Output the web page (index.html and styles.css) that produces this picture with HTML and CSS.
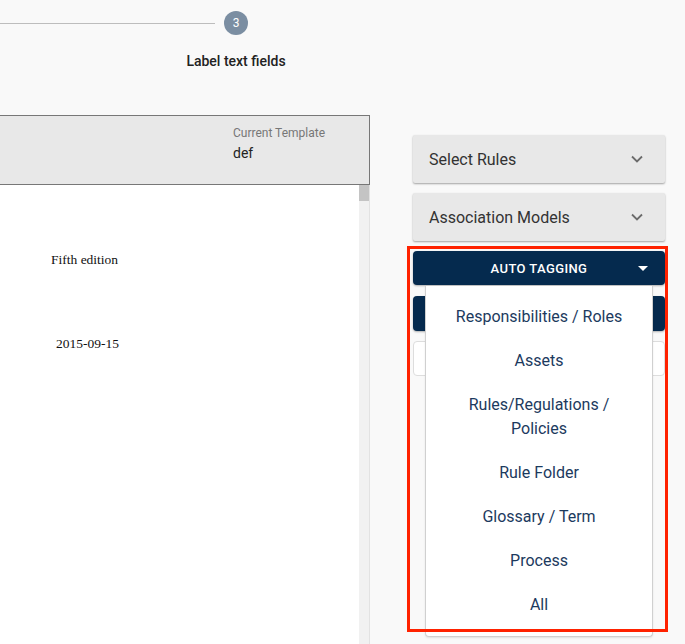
FILE: index.html
```html
<!DOCTYPE html>
<html>
<head>
  <link rel="stylesheet" href="styles.css">
</head>
<body>
  <div class="stepper">
    <div class="step-row">
      <div class="step-line"></div>
      <div class="step-circle">3</div>
    </div>
    <div class="step-label">Label text fields</div>
  </div>

  <div class="main">
    <div class="doc-panel">
      <div class="doc-header">
        <div class="template-info">
          <div class="template-caption">Current Template</div>
          <div class="template-value">def</div>
        </div>
      </div>
      <div class="doc-body">
        <div class="doc-content">
          <p class="doc-edition">Fifth edition</p>
          <p class="doc-date">2015-09-15</p>
        </div>
        <div class="scrollbar"><div class="scroll-thumb"></div></div>
      </div>
    </div>

    <div class="side">
      <div class="exp-panel">
        <span>Select Rules</span>
        <svg class="chevron" width="14" height="14" viewBox="0 0 14 14"><path d="M2 4.5 L7 9.5 L12 4.5" fill="none" stroke="#6b6b6b" stroke-width="1.8"/></svg>
      </div>
      <div class="exp-panel">
        <span>Association Models</span>
        <svg class="chevron" width="14" height="14" viewBox="0 0 14 14"><path d="M2 4.5 L7 9.5 L12 4.5" fill="none" stroke="#6b6b6b" stroke-width="1.8"/></svg>
      </div>

      <div class="tag-area">
        <div class="highlight"></div>
        <div class="dropdown">
          <button class="navy-btn">AUTO TAGGING
            <svg class="caret" width="10" height="5" viewBox="0 0 10 5"><path d="M0 0 L10 0 L5 5 Z" fill="#fff"/></svg>
          </button>
          <ul class="menu">
            <li>Responsibilities / Roles</li>
            <li>Assets</li>
            <li>Rules/Regulations / Policies</li>
            <li>Rule Folder</li>
            <li>Glossary / Term</li>
            <li>Process</li>
            <li>All</li>
          </ul>
        </div>
        <button class="navy-btn second"></button>
        <div class="search-box"></div>
      </div>
    </div>
  </div>
</body>
</html>
```
FILE: styles.css
```css
body {
  margin: 0;
  background-color: #f9f9f9;
  font-family: Roboto, "Noto Sans", Arial, sans-serif;
  height: 644px;
  overflow: hidden;
}

.stepper {
  height: 115px;
}

.step-row {
  display: flex;
  align-items: center;
  padding-top: 11px;
}

.step-line {
  width: 215px;
  height: 1px;
  background-color: #bdbdbd;
  margin-right: 9px;
}

.step-circle {
  width: 24px;
  height: 24px;
  border-radius: 50%;
  background-color: #7b8ea2;
  color: #fff;
  font-size: 12px;
  display: flex;
  align-items: center;
  justify-content: center;
}

.step-label {
  width: 472px;
  text-align: center;
  margin-top: 18px;
  font-size: 14px;
  font-weight: 500;
  color: #222;
  line-height: 16px;
}

.main {
  display: flex;
  align-items: flex-start;
}

.doc-panel {
  width: 370px;
}

.doc-header {
  height: 68px;
  background-color: #e8e8e8;
  border: 1px solid #777;
  border-left: none;
  display: flex;
  justify-content: flex-end;
}

.template-info {
  width: 136px;
  padding-top: 10px;
}

.template-caption {
  font-size: 12px;
  color: #777;
  line-height: 15px;
}

.template-value {
  font-size: 14px;
  color: #222;
  margin-top: 4px;
}

.doc-body {
  display: flex;
  height: 459px;
  border-right: 1px solid #e2e2e2;
}

.doc-content {
  flex: 1;
  background-color: #fff;
  font-family: "Liberation Serif", "Times New Roman", serif;
  font-size: 13.5px;
  color: #111;
}

.doc-edition {
  margin: 67px 0 0 51px;
}

.doc-date {
  margin: 68px 0 0 56px;
}

.scrollbar {
  width: 10px;
  background-color: #f1f1f1;
}

.scroll-thumb {
  height: 16px;
  background-color: #c4c4c4;
}

.side {
  width: 252px;
  margin-left: 43px;
  padding-top: 20px;
}

.exp-panel {
  height: 48px;
  background-color: #e8e8e8;
  border-radius: 2px;
  box-shadow: 0 1px 2px rgba(0, 0, 0, 0.35);
  display: flex;
  align-items: center;
  justify-content: space-between;
  padding: 0 21px 0 16px;
  font-size: 16px;
  color: #333;
  margin-bottom: 10px;
}

.chevron {
  display: block;
}

.tag-area {
  position: relative;
}

.highlight {
  position: absolute;
  top: -5px;
  left: -6px;
  width: 255px;
  height: 380px;
  border: 3px solid #ff2200;
  pointer-events: none;
  z-index: 3;
}

.dropdown {
  position: relative;
}

.navy-btn {
  display: flex;
  align-items: center;
  justify-content: center;
  position: relative;
  width: 100%;
  height: 34px;
  border: none;
  border-radius: 4px;
  background-color: #052a4e;
  color: #fff;
  font-family: Roboto, Arial, sans-serif;
  font-size: 13px;
  font-weight: 500;
  letter-spacing: 0.4px;
  box-shadow: 0 1px 2px rgba(0, 0, 0, 0.3);
  margin: 0;
  padding: 0;
}

.navy-btn.second {
  height: 35px;
  margin-top: 11px;
}

.caret {
  position: absolute;
  right: 17px;
  top: 15px;
}

.search-box {
  height: 33px;
  margin-top: 10px;
  background-color: #fff;
  border: 1px solid #ddd;
  border-radius: 4px;
}

.menu {
  position: absolute;
  top: 35px;
  left: 12px;
  right: 12px;
  margin: 0;
  padding: 9px 0 9px;
  list-style: none;
  background-color: #fff;
  border: 1px solid #d0d0d0;
  border-top: none;
  border-radius: 0 0 4px 4px;
  box-shadow: 0 1px 2px rgba(0, 0, 0, 0.1);
  z-index: 2;
}

.menu li {
  padding: 10px 24px;
  text-align: center;
  font-size: 16px;
  line-height: 24px;
  color: #1c3a5e;
}
```
